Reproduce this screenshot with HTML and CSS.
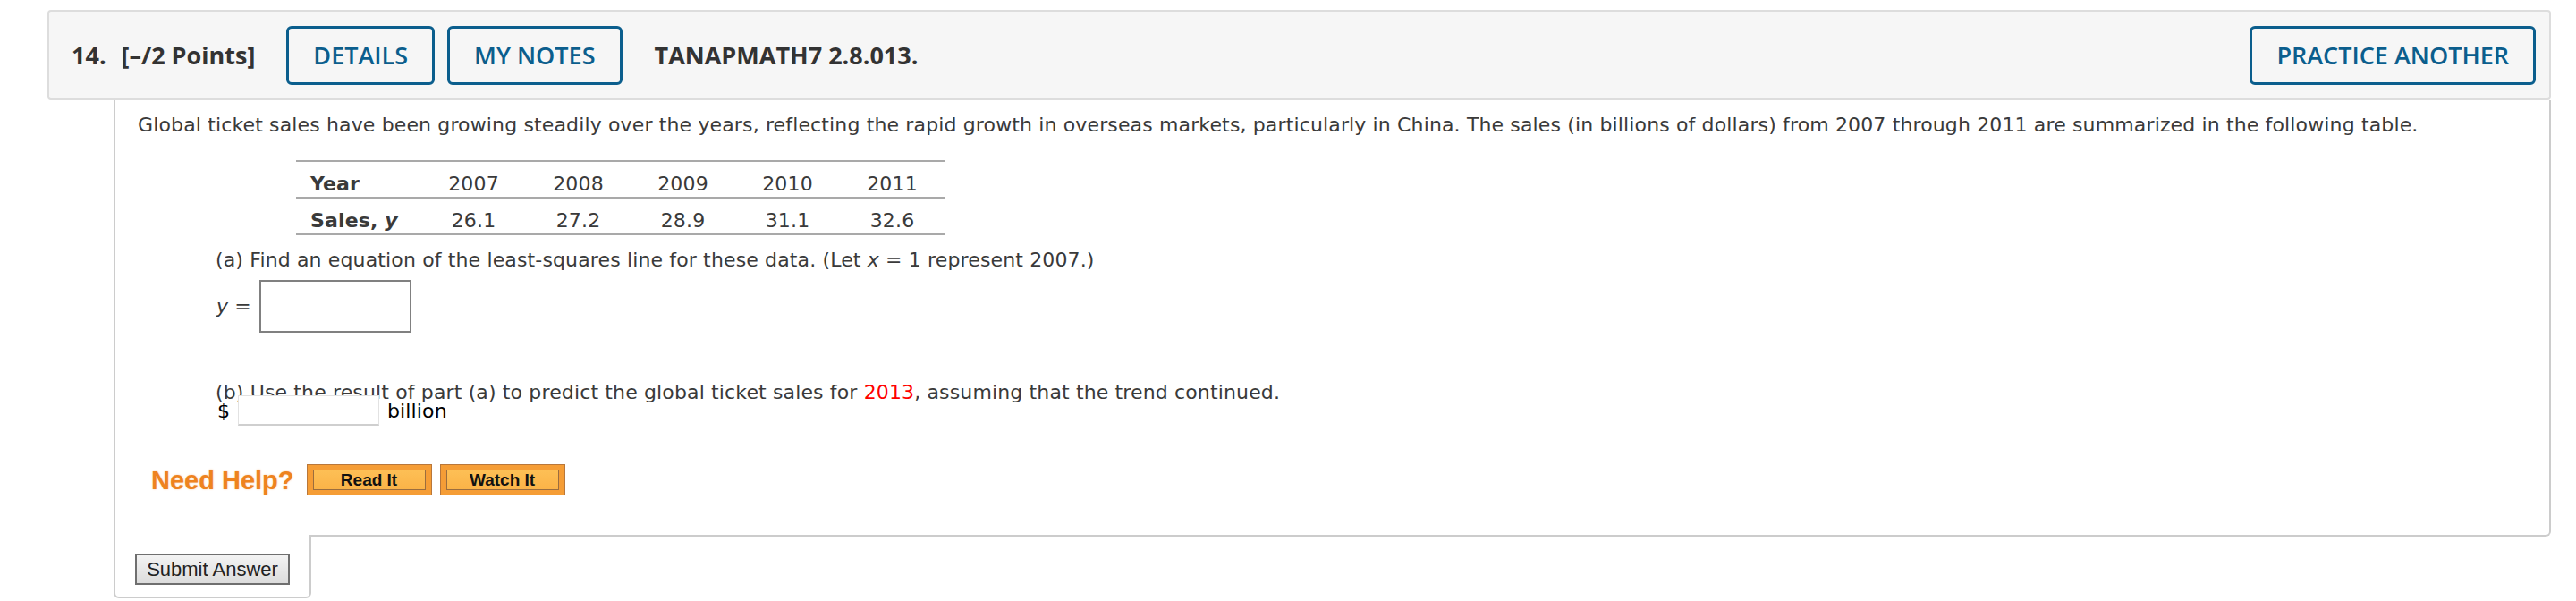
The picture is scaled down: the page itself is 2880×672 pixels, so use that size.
FILE: index.html
```html
<!DOCTYPE html>
<html lang="en">
<head>
<meta charset="utf-8">
<title>Question 14</title>
<link rel="stylesheet" href="styles.css">
</head>
<body>
<div class="page">
  <div class="qhead">
    <span class="qnum">14.</span>
    <span class="pts">[–/2 Points]</span>
    <button class="hbtn hbtn-details">DETAILS</button>
    <button class="hbtn hbtn-notes">MY NOTES</button>
    <span class="qcode">TANAPMATH7 2.8.013.</span>
    <button class="hbtn hbtn-practice">PRACTICE ANOTHER</button>
  </div>
  <div class="qbody">
    <p class="intro">Global ticket sales have been growing steadily over the years, reflecting the rapid growth in overseas markets, particularly in China. The sales (in billions of dollars) from 2007 through 2011 are summarized in the following table.</p>
    <table class="data">
      <tr><th>Year</th><td>2007</td><td>2008</td><td>2009</td><td>2010</td><td>2011</td></tr>
      <tr><th>Sales, <i>y</i></th><td>26.1</td><td>27.2</td><td>28.9</td><td>31.1</td><td>32.6</td></tr>
    </table>
    <p class="part part-a">(a) Find an equation of the least-squares line for these data. (Let <i>x</i> = 1 represent 2007.)</p>
    <div class="eqrow"><span class="eqlabel"><i>y</i> =</span><input class="eqbox" type="text"></div>
    <p class="part part-b">(b) Use the result of part (a) to predict the global ticket sales for <span class="red">2013</span>, assuming that the trend continued.</p>
    <div class="ansrow"><span class="dollar">$</span><input class="ansbox" type="text"><span class="unit">billion</span></div>
    <div class="helprow">
      <span class="needhelp">Need Help?</span>
      <button class="helpbtn"><span>Read It</span></button>
      <button class="helpbtn"><span>Watch It</span></button>
    </div>
  </div>
  <div class="submittab"><button class="submit">Submit Answer</button></div>
</div>
</body>
</html>
```
FILE: styles.css
```css
html, body { margin: 0; padding: 0; background: #fff; }
.page { padding: 11px 28px 0 53px; }

.qhead {
  display: flex;
  align-items: center;
  height: 101px;
  box-sizing: border-box;
  border: 2px solid #dddddd;
  border-radius: 4px;
  background: #f6f6f6;
  padding: 0 15px 0 25px;
  font-family: "Open Sans", sans-serif;
  color: #333;
}
.qnum { font-weight: 700; font-size: 27px; margin-right: 17px; }
.pts { font-weight: 700; font-size: 27px; margin-right: 35px; }
.qcode { font-weight: 700; font-size: 27px; }
.hbtn {
  display: flex;
  align-items: center;
  height: 66px;
  box-sizing: border-box;
  border: 3px solid #0b5e8d;
  border-radius: 6px;
  background: transparent;
  padding: 0 27px;
  color: #0b5e8d;
  font-family: "Open Sans", sans-serif;
  font-weight: 600;
  font-size: 27px;
  margin: 0;
}
.hbtn-details { margin-right: 14px; }
.hbtn-notes { margin-right: 36px; }
.hbtn-practice { margin-left: auto; }

.qbody {
  margin-left: 74px;
  border-left: 2px solid #cccccc;
  border-right: 2px solid #cccccc;
  border-bottom: 2px solid #cccccc;
  border-bottom-right-radius: 6px;
  padding: 15px 0 44px 25px;
  font-family: "DejaVu Sans", Verdana, sans-serif;
  font-size: 22px;
  letter-spacing: 0.14px;
  line-height: 26px;
  color: #3a3a3a;
}
.intro { margin: 0; }
.data {
  margin: 26px 0 0 177px;
  border-collapse: collapse;
  border-top: 2px solid #a9a9a9;
  border-bottom: 2px solid #a9a9a9;
}
.data tr + tr { border-top: 2px solid #a9a9a9; }
.data th, .data td { height: 39px; box-sizing: border-box; padding: 12px 0 1px; vertical-align: top; }
.data th { width: 140px; text-align: left; padding-left: 16px; box-sizing: border-box; font-weight: bold; }
.data td { width: 117px; text-align: center; }
.part { margin: 15px 0 0 87px; }
.part-b { margin-top: 56px; line-height: 21px; }
.eqrow { display: flex; align-items: center; gap: 9px; margin: 9px 0 0 88px; }
.eqbox {
  width: 170px; height: 59px; box-sizing: border-box;
  border: 2px solid #808080; background: #fff; margin: 0; padding: 0;
}
.ansrow {
  display: flex; align-items: flex-end;
  margin-left: 89px; line-height: 21px; color: #000;
}
.dollar { width: 23px; }
.ansbox {
  width: 158px; height: 34px; box-sizing: border-box;
  border: 1px solid #e2e2e2; border-bottom: 2px solid #cfcfcf;
  background: #fff; margin: -7px 9px -6px 0; padding: 0;
}
.red { color: #ff0000; }

.helprow { display: flex; align-items: center; margin: 49px 0 0 15px; height: 35px; }
.needhelp {
  font-family: "Liberation Sans", Arial, sans-serif;
  font-weight: bold; font-size: 29px; color: #ee831f;
  text-shadow: 0 0 2px rgba(238, 131, 31, 0.45);
  margin-right: 14px;
  letter-spacing: 0;
}
.helpbtn {
  width: 140px; height: 35px; box-sizing: border-box;
  border: 1px solid #b9773a; background: #f59d36;
  padding: 5px 6px; margin: 0 9px 0 0;
}
.helpbtn span {
  display: block; height: 100%; box-sizing: border-box;
  border: 1px solid #9b6d3e; background: linear-gradient(#fdbf55, #fbb348);
  font-family: "Liberation Sans", Arial, sans-serif; font-weight: bold;
  font-size: 19px; line-height: 21px; color: #111; letter-spacing: 0;
}

.submittab {
  width: 221px; box-sizing: border-box;
  margin: -2px 0 0 74px;
  border: 2px solid #cccccc; border-top: none;
  border-radius: 0 0 6px 6px;
  background: #fff;
  padding: 21px 22px 13px;
}
.submit {
  display: block; width: 173px; height: 35px; box-sizing: border-box;
  border: 2px solid #6f6f6f; background: linear-gradient(#f3f3f3, #dcdcdc);
  font-family: "Liberation Sans", Arial, sans-serif; font-size: 22px; color: #222;
  padding: 0; margin: 0;
}
```
